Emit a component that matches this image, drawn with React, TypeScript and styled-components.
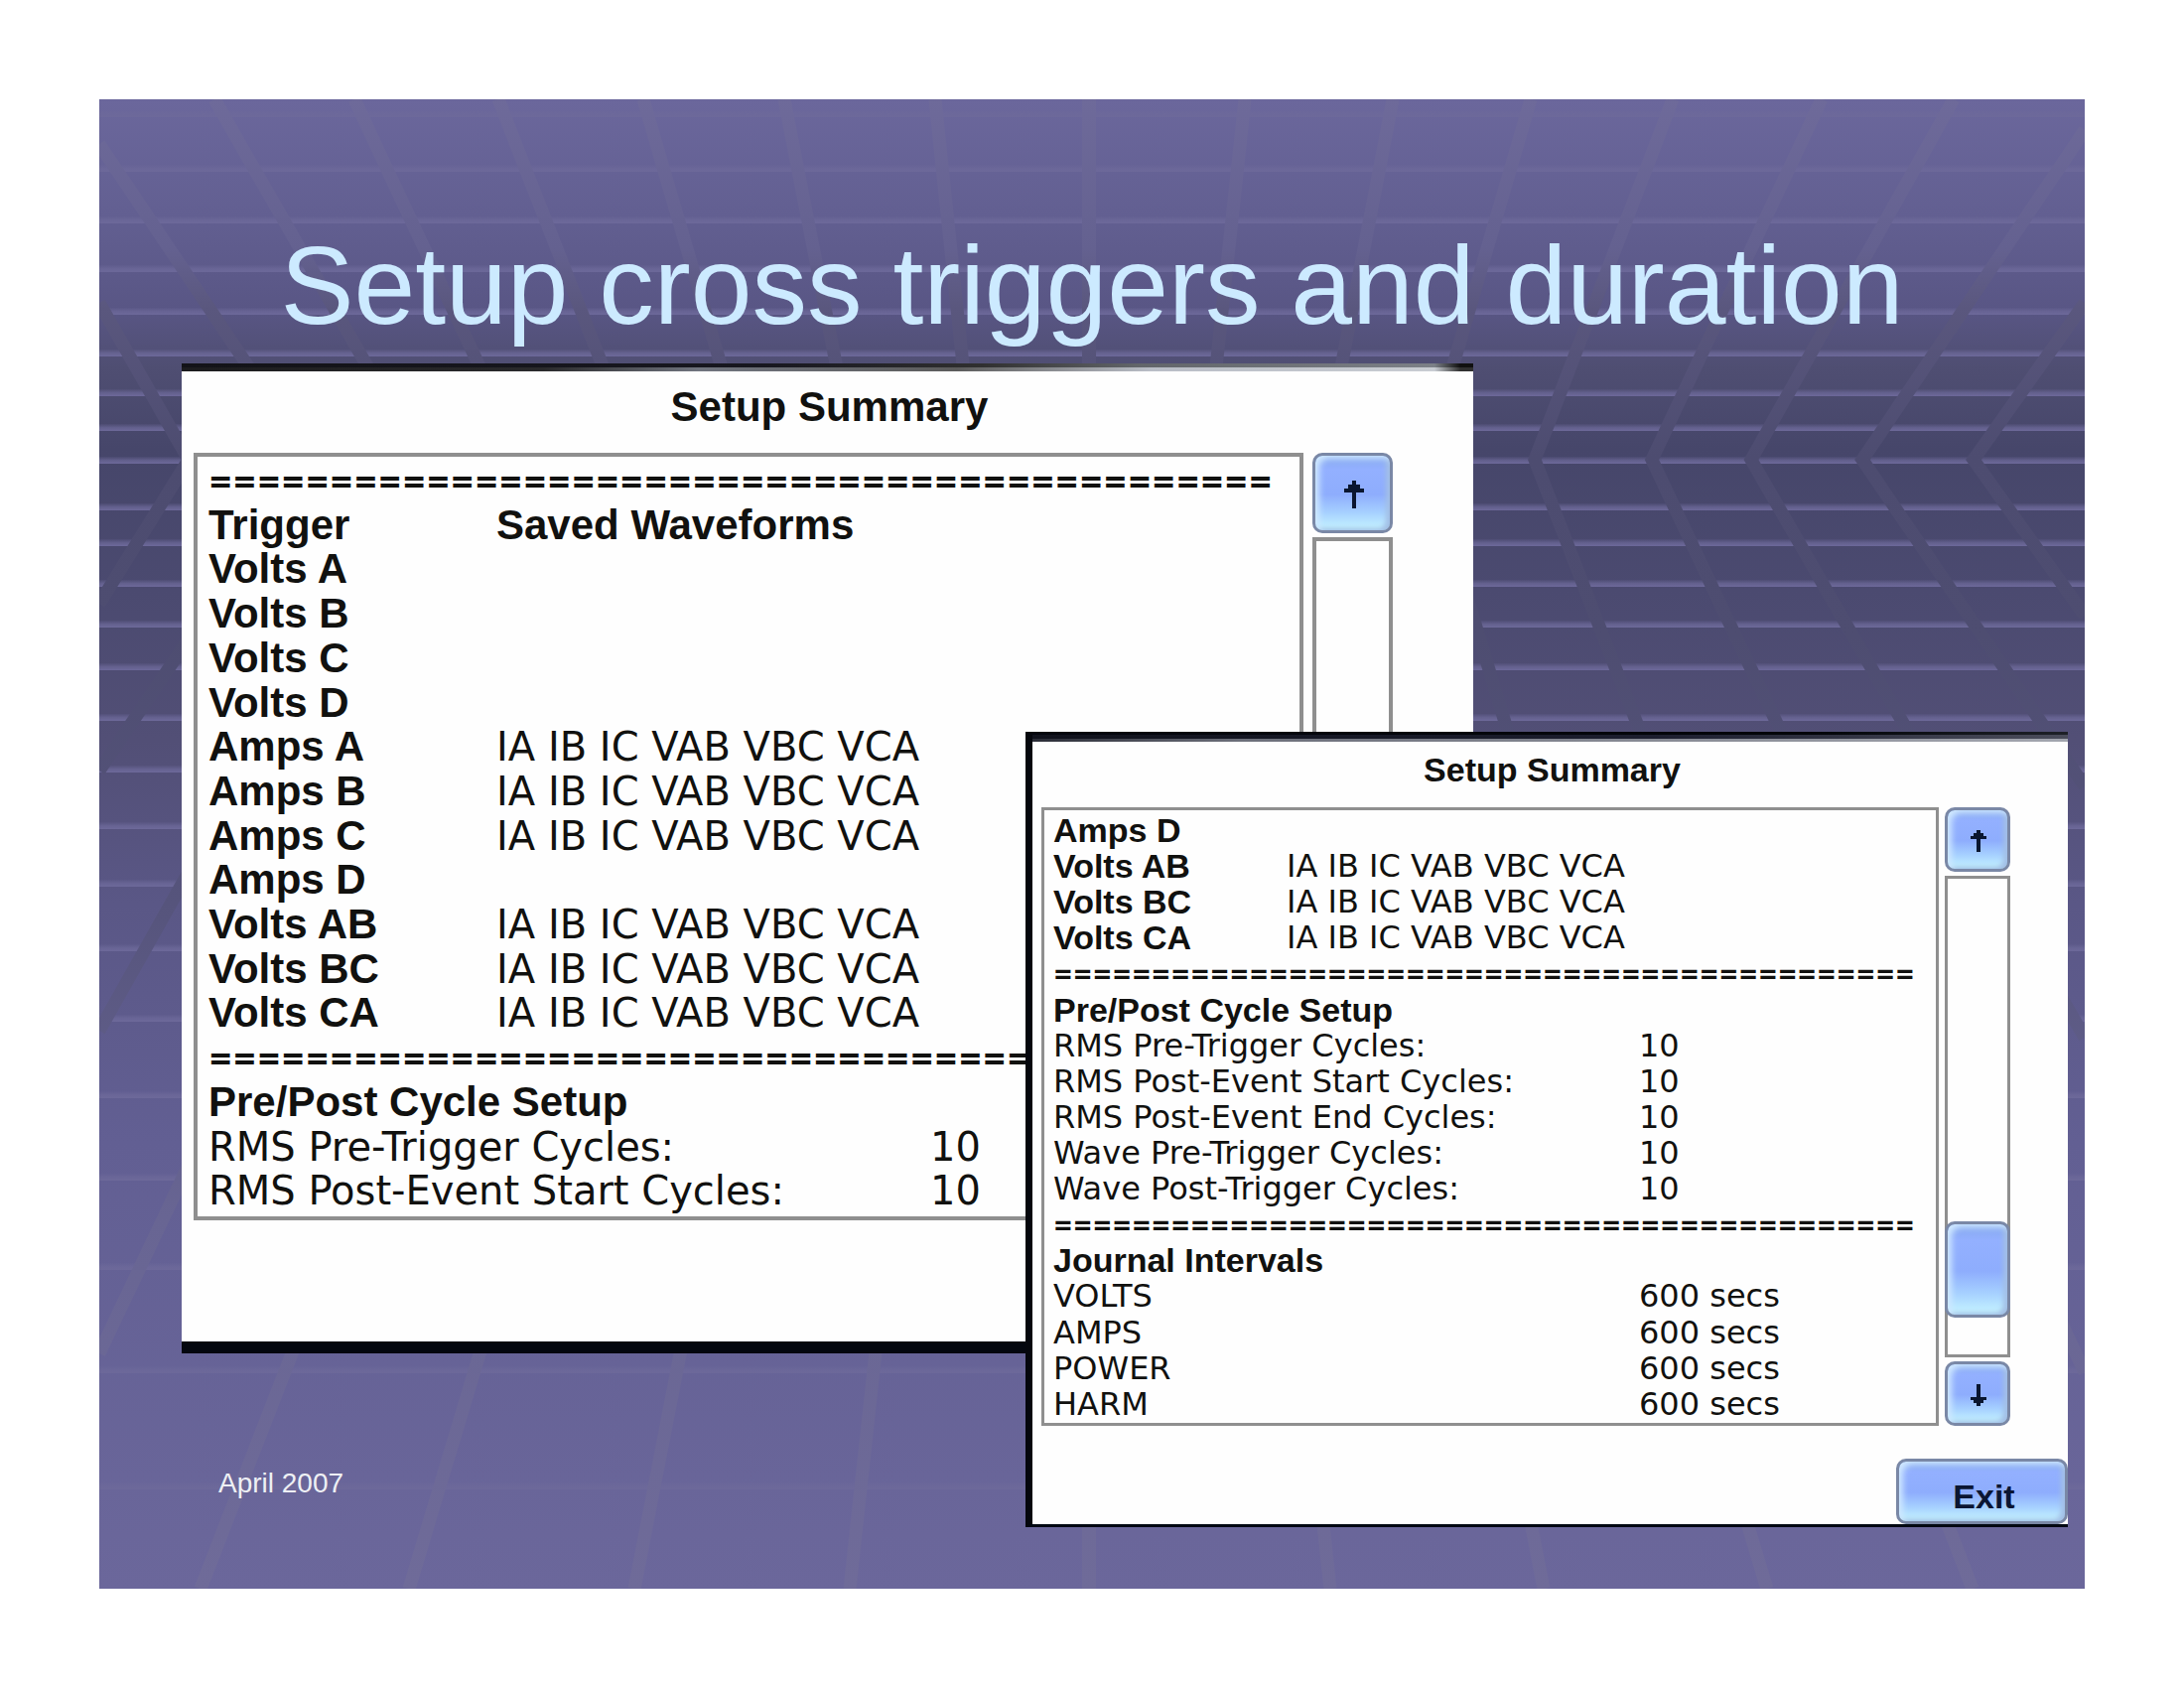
import React from "react";
import styled, { createGlobalStyle, css } from "styled-components";

type Size = "large" | "small";

const metrics = {
  large: {
    text: 40, heading: 42, rule: 42, line: 44, headingLine: 48, tableHeight: 760,
    cols: [290, 437], border: 4, padX: 11, padTop: 2, padBottom: 3, bar: 81, gap: 9,
    left: 12, right: 81, titleTop: 12, titleGap: 22,
  },
  small: {
    text: 32, heading: 34, rule: 34, line: 36, headingLine: 40, tableHeight: 614,
    cols: [235, 355], border: 3, padX: 9, padTop: 2, padBottom: 1, bar: 66, gap: 6,
    left: 9, right: 58, titleTop: 8, titleGap: 18,
  },
};

const GlobalStyle = createGlobalStyle`
  * { box-sizing: border-box; }
  body { margin: 0; background: #fff; }
`;

const Page = styled.main`
  padding: 100px;
`;

const Slide = styled.section`
  position: relative;
  display: flex;
  flex-direction: column;
  aspect-ratio: 4 / 3;
  padding: 126px 0 90px;
  font-family: "Liberation Sans", Arial, sans-serif;
  overflow: hidden;
`;

const Backdrop = styled.svg`
  position: absolute;
  inset: 0;
  width: 100%;
  height: 100%;
`;

const SlideTitle = styled.h1`
  position: relative;
  margin: 0 0 16px;
  font-size: 111px;
  line-height: 124px;
  font-weight: 400;
  text-align: center;
  color: #cceaff;
`;

const Stage = styled.div`
  position: relative;
`;

const SlideDate = styled.footer`
  position: relative;
  margin-top: auto;
  padding-left: 120px;
  font-size: 28px;
  line-height: 32px;
  color: #eef0f4;
`;

const Window = styled.article<{ $size: Size }>`
  background: #fefefe;
  color: #11110f;
  ${({ $size }) =>
    $size === "large"
      ? css`
          width: 65.05%;
          margin-left: 4.15%;
          padding-bottom: 122px;
          border-bottom: 12px solid #04070f;
        `
      : css`
          position: absolute;
          top: 371px;
          left: 46.65%;
          width: 52.5%;
          border-left: 7px solid #05070d;
          border-bottom: 3px solid #020812;
        `}
`;

const TopEdge = styled.div<{ $size: Size }>`
  ${({ $size }) =>
    $size === "large"
      ? css`
          height: 8px;
          background:
            linear-gradient(90deg, #131318, #17171f 45%, #303030 62%, #62656a 74%, #7c8087 97%, #101010 99%) top / 100% 4px no-repeat,
            linear-gradient(90deg, #1c1c1e, #2a2a2c 28%, #70747e 40%, #5c5c5c 60%, #b9bdc6 75%, #c8ccd2 97%, #303030 99%) bottom / 100% 4px no-repeat;
        `
      : css`
          height: 10px;
          background:
            linear-gradient(90deg, #05070f, #030509 75%, #1d2027) top / 100% 3px no-repeat,
            linear-gradient(90deg, #10121c, #1c1e2e 60%, #4a4c5a) 0 3px / 100% 4px no-repeat,
            linear-gradient(90deg, #2a2c36, #6c6f7a 20%, #a2a5ae) bottom / 100% 3px no-repeat;
        `}
`;

const WindowTitle = styled.h2<{ $size: Size }>`
  margin: 0;
  padding: ${({ $size }) => metrics[$size].titleTop}px 0 0 4px;
  font-size: ${({ $size }) => metrics[$size].heading}px;
  line-height: ${({ $size }) => metrics[$size].headingLine}px;
  font-weight: 700;
  text-align: center;
`;

const Body = styled.div<{ $size: Size }>`
  display: flex;
  gap: ${({ $size }) => metrics[$size].gap}px;
  padding: ${({ $size }) => {
    const m = metrics[$size];
    return `${m.titleGap}px ${m.right}px 0 ${m.left}px`;
  }};
`;

const Panel = styled.div<{ $size: Size }>`
  flex: 1;
  min-width: 0;
  overflow: hidden;
  border: ${({ $size }) => metrics[$size].border}px solid #8f8f8f;
  padding: ${({ $size }) => {
    const m = metrics[$size];
    return `${m.padTop}px 0 ${m.padBottom}px ${m.padX}px`;
  }};
`;

const Table = styled.table<{ $size: Size }>`
  width: 100%;
  height: ${({ $size }) => metrics[$size].tableHeight}px;
  table-layout: fixed;
  border-collapse: collapse;
  font-family: "DejaVu Sans", sans-serif;
  font-size: ${({ $size }) => metrics[$size].text}px;
  line-height: ${({ $size }) => metrics[$size].line}px;
  white-space: nowrap;
`;

const Column = styled.col<{ $width: number }>`
  width: ${({ $width }) => $width}px;
`;

const Heading = styled.th<{ $size: Size }>`
  padding: 0;
  text-align: left;
  vertical-align: top;
  font-family: "Liberation Sans", Arial, sans-serif;
  font-size: ${({ $size }) => metrics[$size].heading}px;
  font-weight: 700;
`;

const Cell = styled.td`
  padding: 0;
  vertical-align: top;
`;

const Rule = styled.td<{ $size: Size }>`
  padding: 0;
  vertical-align: top;
  font-family: Lato, sans-serif;
  font-weight: 700;
  font-size: ${({ $size }) => metrics[$size].rule}px;
`;

const Scrollbar = styled.div<{ $size: Size }>`
  display: flex;
  flex-direction: column;
  gap: 4px;
  width: ${({ $size }) => metrics[$size].bar}px;
`;

const glossy = css`
  border: 3px solid #7a88a6;
  border-radius: 10px;
  background: linear-gradient(180deg, #86a9ee 0%, #93b0ff 18%, #8eadfd 52%, #a6d0ff 76%, #c2f0ff 96%);
  box-shadow: inset 6px 5px 6px -2px #cfe8ff, inset -5px -3px 5px -1px #a2bfe6;
`;

const ArrowButton = styled.button<{ $size: Size }>`
  ${glossy}
  display: flex;
  align-items: center;
  justify-content: center;
  flex: none;
  height: ${({ $size }) => metrics[$size].bar - ($size === "small" ? 1 : 0)}px;
  padding: 2px 0 0 2px;
`;

const ArrowIcon = styled.svg<{ $size: Size; $down?: boolean }>`
  width: ${({ $size }) => ($size === "large" ? 20 : 16)}px;
  height: ${({ $size }) => ($size === "large" ? 28 : 22)}px;
  transform: ${({ $down }) => ($down ? "rotate(180deg)" : "none")};
`;

const Track = styled.div<{ $size: Size }>`
  display: flex;
  flex-direction: column;
  flex: 1;
  border: ${({ $size }) => metrics[$size].border}px solid #8f8f8f;
`;

const Thumb = styled.div`
  ${glossy}
  height: 97px;
  margin: auto -3px 37px;
`;

const Actions = styled.div`
  display: flex;
  justify-content: flex-end;
  padding-top: 33px;
`;

const ExitButton = styled.button`
  ${glossy}
  width: 173px;
  height: 66px;
  padding: 10px 0 0 4px;
  font-family: "Liberation Sans", Arial, sans-serif;
  font-size: 34px;
  line-height: 40px;
  font-weight: 700;
  color: #0b1633;
`;

const horizontals = [
  18, 73, 125, 174, 217, 259, 299, 334, 367, 414, 450, 491, 532, 575, 626, 678,
  735, 793, 858, 929, 1006, 1089, 1179, 1283, 1400,
];

const rays: number[][][] = [
  [[0, 205], [90, 363], [0, 508]],
  [[0, 45], [213, 363], [0, 676]],
  [[116, 0], [324, 363], [0, 938]],
  [[257, 0], [427, 363], [0, 1263]],
  [[402, 0], [544, 363], [102, 1500]],
  [[548, 0], [654, 363], [312, 1500]],
  [[690, 0], [761, 363], [539, 1500]],
  [[842, 0], [880, 363], [756, 1500]],
  [[997, 0], [997, 363], [997, 1500]],
  [[1154, 0], [1115, 363], [1240, 1500]],
  [[1303, 0], [1233, 363], [1455, 1500]],
  [[1442, 0], [1336, 363], [1680, 1500]],
  [[1585, 0], [1446, 363], [1887, 1500]],
  [[1735, 0], [1564, 363], [2000, 1282]],
  [[1868, 0], [1664, 363], [2000, 945]],
  [[2000, 31], [1776, 363], [2000, 692]],
  [[2000, 205], [1888, 363], [2000, 520]],
];

function GridBackdrop() {
  return (
    <Backdrop viewBox="0 0 2000 1500" preserveAspectRatio="none" aria-hidden="true">
      <defs>
        <linearGradient id="sky" x1="0" y1="0" x2="0" y2="1">
          <stop offset="0" stopColor="#6b679c" />
          <stop offset="0.08" stopColor="#625f91" />
          <stop offset="0.14" stopColor="#595685" />
          <stop offset="0.18" stopColor="#4f4e72" />
          <stop offset="0.235" stopColor="#46466a" />
          <stop offset="0.33" stopColor="#4b4a70" />
          <stop offset="0.43" stopColor="#524f76" />
          <stop offset="0.54" stopColor="#5a5786" />
          <stop offset="0.7" stopColor="#625f93" />
          <stop offset="1" stopColor="#6b679b" />
        </linearGradient>
        <linearGradient id="beam" gradientUnits="userSpaceOnUse" x1="0" y1="0" x2="0" y2="1500">
          <stop offset="0" stopColor="#6e6a9a" />
          <stop offset="0.1" stopColor="#646190" />
          <stop offset="0.14" stopColor="#5a577e" />
          <stop offset="0.24" stopColor="#4d4c70" />
          <stop offset="0.36" stopColor="#4e4d71" />
          <stop offset="0.54" stopColor="#56547c" />
          <stop offset="0.75" stopColor="#686593" />
          <stop offset="1" stopColor="#6f6b99" />
        </linearGradient>
        <linearGradient id="bar" x1="0" y1="0" x2="0" y2="1">
          <stop offset="0" stopColor="#6d699a" stopOpacity="0.1" />
          <stop offset="0.5" stopColor="#6d699a" stopOpacity="0.7" />
          <stop offset="1" stopColor="#6d699a" />
        </linearGradient>
      </defs>
      <rect width="2000" height="1500" fill="url(#sky)" />
      {horizontals.map((y) => (
        <rect key={y} x="0" y={y - 7} width="2000" height="7" fill="url(#bar)" />
      ))}
      {rays.map((points) => (
        <polyline
          key={points.join()}
          points={points.map((p) => p.join()).join(" ")}
          fill="none"
          stroke="url(#beam)"
          strokeWidth="13"
        />
      ))}
      <rect x="990" width="14" height="1500" fill="url(#beam)" />
    </Backdrop>
  );
}

function Arrow({ size, down }: { size: Size; down?: boolean }) {
  return (
    <ArrowIcon $size={size} $down={down} viewBox="0 0 20 28" shapeRendering="crispEdges" aria-hidden="true">
      <path d="M8 0h4v4h4v4h4v4h-8v16h-4v-16h-8v-4h4v-4h4z" fill="#0a1630" />
    </ArrowIcon>
  );
}

type RowData =
  | { kind: "rule" }
  | { kind: "title"; label: string }
  | { kind: "trigger"; label: string; saved?: string; heading?: boolean }
  | { kind: "value"; label: string; value: string };

const saved = "IA IB IC VAB VBC VCA";

const triggerRows: RowData[] = [
  { kind: "rule" },
  { kind: "trigger", label: "Trigger", saved: "Saved Waveforms", heading: true },
  { kind: "trigger", label: "Volts A" },
  { kind: "trigger", label: "Volts B" },
  { kind: "trigger", label: "Volts C" },
  { kind: "trigger", label: "Volts D" },
  { kind: "trigger", label: "Amps A", saved },
  { kind: "trigger", label: "Amps B", saved },
  { kind: "trigger", label: "Amps C", saved },
  { kind: "trigger", label: "Amps D" },
  { kind: "trigger", label: "Volts AB", saved },
  { kind: "trigger", label: "Volts BC", saved },
  { kind: "trigger", label: "Volts CA", saved },
  { kind: "rule" },
  { kind: "title", label: "Pre/Post Cycle Setup" },
  { kind: "value", label: "RMS Pre-Trigger Cycles:", value: "10" },
  { kind: "value", label: "RMS Post-Event Start Cycles:", value: "10" },
];

const cycleRows: RowData[] = [
  { kind: "trigger", label: "Amps D" },
  { kind: "trigger", label: "Volts AB", saved },
  { kind: "trigger", label: "Volts BC", saved },
  { kind: "trigger", label: "Volts CA", saved },
  { kind: "rule" },
  { kind: "title", label: "Pre/Post Cycle Setup" },
  { kind: "value", label: "RMS Pre-Trigger Cycles:", value: "10" },
  { kind: "value", label: "RMS Post-Event Start Cycles:", value: "10" },
  { kind: "value", label: "RMS Post-Event End Cycles:", value: "10" },
  { kind: "value", label: "Wave Pre-Trigger Cycles:", value: "10" },
  { kind: "value", label: "Wave Post-Trigger Cycles:", value: "10" },
  { kind: "rule" },
  { kind: "title", label: "Journal Intervals" },
  { kind: "value", label: "VOLTS", value: "600 secs" },
  { kind: "value", label: "AMPS", value: "600 secs" },
  { kind: "value", label: "POWER", value: "600 secs" },
  { kind: "value", label: "HARM", value: "600 secs" },
];

function Row({ row, size }: { row: RowData; size: Size }) {
  switch (row.kind) {
    case "rule":
      return <tr><Rule $size={size} colSpan={3}>{"=".repeat(44)}</Rule></tr>;
    case "title":
      return <tr><Heading $size={size} colSpan={3}>{row.label}</Heading></tr>;
    case "trigger":
      return (
        <tr>
          <Heading $size={size} scope="row">{row.label}</Heading>
          {row.heading
            ? <Heading $size={size} colSpan={2}>{row.saved}</Heading>
            : <Cell colSpan={2}>{row.saved}</Cell>}
        </tr>
      );
    case "value":
      return (
        <tr>
          <Cell colSpan={2}>{row.label}</Cell>
          <Cell>{row.value}</Cell>
        </tr>
      );
  }
}

function Summary({ size, rows }: { size: Size; rows: RowData[] }) {
  const isSmall = size === "small";
  return (
    <Window $size={size}>
      <TopEdge $size={size} />
      <WindowTitle $size={size}>Setup Summary</WindowTitle>
      <Body $size={size}>
        <Panel $size={size}>
          <Table $size={size}>
            <colgroup>
              {metrics[size].cols.map((width) => <Column key={width} $width={width} />)}
              <col />
            </colgroup>
            <tbody>
              {rows.map((row, i) => <Row key={i} row={row} size={size} />)}
            </tbody>
          </Table>
        </Panel>
        <Scrollbar $size={size}>
          <ArrowButton $size={size} type="button" aria-label="Scroll up"><Arrow size={size} /></ArrowButton>
          <Track $size={size}>{isSmall && <Thumb />}</Track>
          {isSmall && (
            <ArrowButton $size={size} type="button" aria-label="Scroll down"><Arrow size={size} down /></ArrowButton>
          )}
        </Scrollbar>
      </Body>
      {isSmall && <Actions><ExitButton type="button">Exit</ExitButton></Actions>}
    </Window>
  );
}

export default function App() {
  return (
    <Page>
      <GlobalStyle />
      <Slide>
        <GridBackdrop />
        <SlideTitle>Setup cross triggers and duration</SlideTitle>
        <Stage>
          <Summary size="large" rows={triggerRows} />
          <Summary size="small" rows={cycleRows} />
        </Stage>
        <SlideDate>April 2007</SlideDate>
      </Slide>
    </Page>
  );
}
